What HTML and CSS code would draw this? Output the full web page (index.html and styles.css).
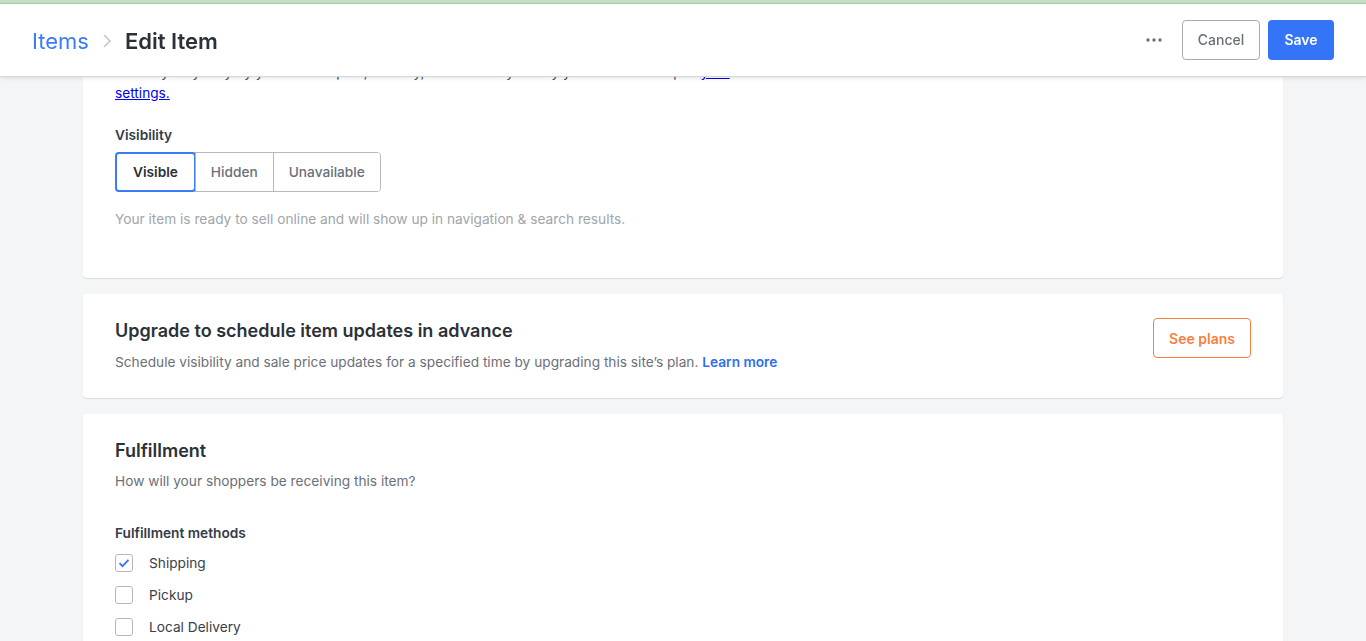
FILE: index.html
```html
<!DOCTYPE html>
<html lang="en">

<head>
    <meta charset="UTF-8">
    <meta name="viewport" content="width=device-width, initial-scale=1.0">
    <title>Edit Item</title>
    <link rel="stylesheet" href="styles.css">
</head>

<body>
    <header class="topbar">
        <nav class="crumbs">
            <a class="crumb-link" href="#">Items</a>
            <svg class="crumb-sep" width="10" height="16" viewBox="0 0 10 16">
                <path d="M2 2l6 6-6 6" fill="none" stroke="#c4c7cb" stroke-width="1.6" />
            </svg>
            <h1 class="crumb-current">Edit Item</h1>
        </nav>
        <div class="actions">
            <button class="more-button" aria-label="More">
                <svg width="16" height="4" viewBox="0 0 16 4">
                    <circle cx="2" cy="2" r="1.7" fill="#6b7078" />
                    <circle cx="8" cy="2" r="1.7" fill="#6b7078" />
                    <circle cx="14" cy="2" r="1.7" fill="#6b7078" />
                </svg>
            </button>
            <button class="btn btn-cancel">Cancel</button>
            <button class="btn btn-save">Save</button>
        </div>
    </header>

    <main class="page">
        <section class="card card-visibility">
            <p class="intro">Visibility may vary by your store's plan, country, and currency. Verify your item is set up in <a href="#">your settings.</a></p>

            <div class="field-label">Visibility</div>
            <div class="segmented">
                <button class="segment active">Visible</button>
                <button class="segment">Hidden</button>
                <button class="segment">Unavailable</button>
            </div>
            <p class="hint">Your item is ready to sell online and will show up in navigation &amp; search results.</p>
        </section>

        <section class="card card-upgrade">
            <div class="upgrade-text">
                <h2 class="card-title">Upgrade to schedule item updates in advance</h2>
                <p class="card-desc">Schedule visibility and sale price updates for a specified time by upgrading this site’s plan. <a class="learn-more" href="#">Learn more</a></p>
            </div>
            <button class="btn btn-plans">See plans</button>
        </section>

        <section class="card card-fulfillment">
            <h2 class="card-title">Fulfillment</h2>
            <p class="card-desc">How will your shoppers be receiving this item?</p>

            <div class="field-label methods-label">Fulfillment methods</div>
            <ul class="checklist">
                <li class="check-row">
                    <span class="checkbox checked">
                        <svg width="12" height="10" viewBox="0 0 12 10">
                            <path d="M1.5 5.2l3 3 6-6.4" fill="none" stroke="#3474f6" stroke-width="1.8" />
                        </svg>
                    </span>
                    Shipping
                </li>
                <li class="check-row">
                    <span class="checkbox"></span>
                    Pickup
                </li>
                <li class="check-row">
                    <span class="checkbox"></span>
                    Local Delivery
                </li>
            </ul>
        </section>
    </main>
</body>

</html>
```

FILE: styles.css
```css
body {
    margin: 0;
    padding: 0;
    background-color: #f4f5f7;
    font-family: Inter, "Open Sans", sans-serif;
    color: #2b3138;
}

/* Fixed header over the scrolled content */
.topbar {
    position: fixed;
    top: 0;
    left: 0;
    right: 0;
    height: 73px;
    display: flex;
    align-items: center;
    justify-content: space-between;
    padding: 0 32px;
    background-color: white;
    border-top: 3px solid #c3e0c3;
    box-shadow: 0 1px 0 #d6d8db, 0 2px 4px rgba(0, 0, 0, 0.12);
    z-index: 10;
}

.topbar::before {
    content: "";
    position: absolute;
    top: 0;
    left: 0;
    right: 0;
    height: 1px;
    background-color: #a9c6a9;
}

.crumbs {
    display: flex;
    align-items: center;
    gap: 13px;
    padding-top: 3px;
}

.crumb-link {
    font-size: 22px;
    color: #3b7cf6;
    text-decoration: none;
}

.crumb-current {
    margin: 0;
    font-size: 22px;
    font-weight: 600;
    color: #2b3138;
}

.actions {
    display: flex;
    align-items: center;
    gap: 8px;
}

.more-button {
    background: none;
    border: none;
    padding: 0;
    width: 20px;
    height: 24px;
    margin-right: 10px;
    display: flex;
    align-items: center;
    justify-content: center;
    cursor: pointer;
}

.btn {
    height: 40px;
    border-radius: 4px;
    font-family: inherit;
    font-size: 14px;
    font-weight: 500;
    cursor: pointer;
}

.btn-cancel {
    width: 78px;
    background-color: white;
    border: 1px solid #a8acb1;
    color: #6b7078;
}

.btn-save {
    width: 66px;
    background-color: #3474f6;
    border: none;
    color: white;
    font-weight: 600;
}

/* Content */
.page {
    width: 1200px;
    margin: 0 auto;
    display: flex;
    flex-direction: column;
    gap: 16px;
}

.card {
    background-color: white;
    border-radius: 4px;
    box-shadow: 0 1px 1px rgba(0, 0, 0, 0.1);
    padding: 32px;
}

.card-visibility {
    padding-top: 62px;
    padding-bottom: 51px;
    border-top-left-radius: 0;
    border-top-right-radius: 0;
}

.intro {
    margin: 0 0 23px 0;
    max-width: 640px;
    font-size: 13.7px;
    line-height: 21px;
    color: #4a5059;
}

.intro a {
    color: #0000ee;
}

.field-label {
    font-size: 13.7px;
    font-weight: 600;
    color: #333c48;
    margin-bottom: 9px;
}

.segmented {
    display: inline-flex;
    border: 1px solid #b4b8bd;
    border-radius: 4px;
}

.segment {
    height: 38px;
    padding: 0 15px;
    background-color: white;
    border: none;
    border-left: 1px solid #b4b8bd;
    font-family: inherit;
    font-size: 13.7px;
    font-weight: 500;
    color: #6b7078;
    cursor: pointer;
}

.segment:first-child {
    border-left: none;
    border-radius: 3px 0 0 3px;
}

.segment:last-child {
    border-radius: 0 3px 3px 0;
}

.segment.active {
    margin: -1px;
    height: 40px;
    padding: 0 16px;
    border: 2px solid #3b7cf6;
    border-radius: 4px;
    color: #2b3138;
    font-weight: 600;
}

.hint {
    margin: 19px 0 0 0;
    font-size: 13.7px;
    color: #a0a5ab;
}

.card-upgrade {
    display: flex;
    align-items: flex-start;
    justify-content: space-between;
    padding-top: 24px;
    padding-bottom: 28px;
}

.upgrade-text {
    padding-top: 2px;
}

.card-title {
    margin: 0;
    font-size: 18px;
    font-weight: 600;
    color: #2b3138;
}

.card-desc {
    margin: 13px 0 0 0;
    font-size: 13.7px;
    color: #6b7078;
}

.learn-more {
    color: #2f6fec;
    font-weight: 600;
    text-decoration: none;
}

.btn-plans {
    width: 98px;
    background-color: white;
    border: 1px solid #f5813f;
    color: #f5813f;
    font-weight: 600;
}

.card-fulfillment {
    padding-top: 26px;
    height: 300px;
}

.card-fulfillment .card-desc {
    margin-top: 12px;
}

.methods-label {
    margin-top: 36px;
    margin-bottom: 13px;
}

.checklist {
    list-style: none;
    margin: 0;
    padding: 0;
    display: flex;
    flex-direction: column;
    gap: 14px;
}

.check-row {
    display: flex;
    align-items: center;
    gap: 16px;
    font-size: 13.7px;
    color: #3a4048;
    height: 18px;
}

.checkbox {
    width: 16px;
    height: 16px;
    border: 1px solid #b4b8bd;
    border-radius: 3px;
    display: flex;
    align-items: center;
    justify-content: center;
}
```
